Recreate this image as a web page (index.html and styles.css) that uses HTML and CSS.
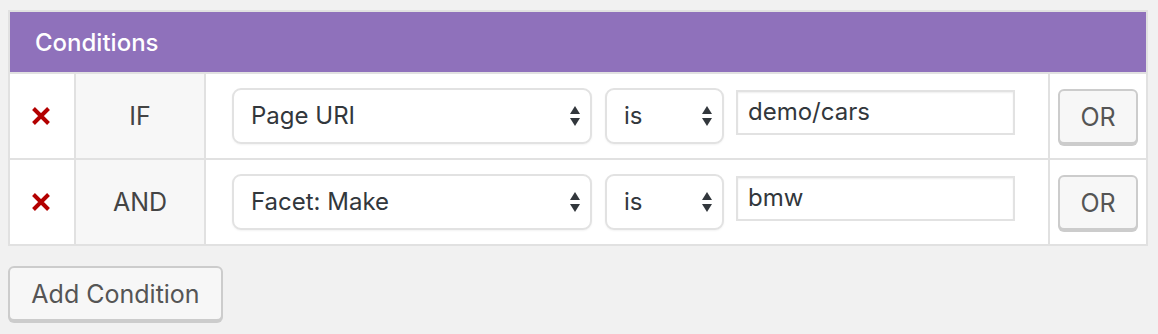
FILE: index.html
```html
<!DOCTYPE html>
<html>
<head>
<meta charset="utf-8">
<link rel="stylesheet" href="styles.css">
</head>
<body>
<div class="page">
  <div class="panel">
    <div class="panel-head">Conditions</div>
    <div class="row">
      <div class="cell cell-del">
        <svg class="icon-del" width="20" height="20" viewBox="0 0 20 20"><path d="M2.5 2.5 L17.5 17.5 M17.5 2.5 L2.5 17.5"/></svg>
      </div>
      <div class="cell cell-op">IF</div>
      <div class="cell cell-fields">
        <div class="select select-wide"><span>Page URI</span><svg class="arrows" width="10" height="21" viewBox="0 0 10 21"><polygon points="0,8 5,0 10,8"/><polygon points="0,12 10,12 5,20"/></svg></div>
        <div class="select select-narrow"><span>is</span><svg class="arrows" width="10" height="21" viewBox="0 0 10 21"><polygon points="0,8 5,0 10,8"/><polygon points="0,12 10,12 5,20"/></svg></div>
        <input class="text" type="text" value="demo/cars">
      </div>
      <div class="cell cell-or"><button class="btn btn-or">OR</button></div>
    </div>
    <div class="row">
      <div class="cell cell-del">
        <svg class="icon-del" width="20" height="20" viewBox="0 0 20 20"><path d="M2.5 2.5 L17.5 17.5 M17.5 2.5 L2.5 17.5"/></svg>
      </div>
      <div class="cell cell-op">AND</div>
      <div class="cell cell-fields">
        <div class="select select-wide"><span>Facet: Make</span><svg class="arrows" width="10" height="21" viewBox="0 0 10 21"><polygon points="0,8 5,0 10,8"/><polygon points="0,12 10,12 5,20"/></svg></div>
        <div class="select select-narrow"><span>is</span><svg class="arrows" width="10" height="21" viewBox="0 0 10 21"><polygon points="0,8 5,0 10,8"/><polygon points="0,12 10,12 5,20"/></svg></div>
        <input class="text" type="text" value="bmw">
      </div>
      <div class="cell cell-or"><button class="btn btn-or">OR</button></div>
    </div>
  </div>
  <button class="btn btn-add">Add Condition</button>
</div>
</body>
</html>
```
FILE: styles.css
```css
* { box-sizing: border-box; }
body {
  margin: 0;
  background: #f1f1f1;
  font-family: Inter, "Open Sans", "Liberation Sans", sans-serif;
  color: #32373c;
}
.page {
  padding: 10px 8px;
}
.panel {
  width: 1140px;
  border: 2px solid #e1e1e1;
  background: #fff;
}
.panel-head {
  height: 60px;
  background: #8f71bb;
  color: #fff;
  font-size: 24px;
  font-weight: 500;
  padding-left: 25px;
  display: flex;
  align-items: center;
}
.row {
  display: grid;
  grid-template-columns: 64px 130px 844px 98px;
  height: 86px;
  border-top: 2px solid #e1e1e1;
}
.cell {
  display: flex;
  align-items: center;
}
.cell + .cell {
  border-left: 2px solid #e1e1e1;
}
.cell-del {
  justify-content: center;
  padding-right: 2px;
}
.icon-del path {
  stroke: #b30000;
  stroke-width: 4;
  fill: none;
}
.cell-op {
  background: #f7f7f7;
  justify-content: center;
  font-size: 25px;
  color: #444;
}
.cell-fields {
  padding-left: 26px;
  gap: 12px;
}
.select {
  height: 56px;
  border: 2px solid #e2e2e2;
  border-radius: 9px;
  background: #fff;
  box-shadow: 0 1px 2px rgba(0,0,0,0.05);
  display: flex;
  align-items: center;
  justify-content: space-between;
  padding: 0 10px 0 17px;
  font-size: 24px;
  color: #32373c;
}
.select span { margin-top: -2px; }
.select-wide { width: 360px; }
.select-narrow { width: 119px; margin-left: 1px; }
.arrows polygon { fill: #32373c; }
.text {
  align-self: flex-start;
  margin-top: 16px;
  width: 279px;
  height: 45px;
  border: 2px solid #e2e2e2;
  border-radius: 0;
  box-shadow: inset 0 1px 2px rgba(0,0,0,0.07);
  padding: 0 0 3px 10px;
  font-family: inherit;
  font-size: 24px;
  color: #32373c;
  background: #fff;
  outline: none;
}
.btn {
  font-family: inherit;
  font-size: 25px;
  color: #555;
  background: #f7f7f7;
  border: 2px solid #ccc;
  border-radius: 6px;
  box-shadow: 0 2px 0 #ccc;
  padding: 0;
  cursor: pointer;
}
.cell-or {
  padding-left: 8px;
}
.btn-or {
  width: 80px;
  height: 55px;
  margin-top: 1px;
}
.btn-add {
  display: block;
  margin-top: 20px;
  width: 215px;
  height: 55px;
}
```
